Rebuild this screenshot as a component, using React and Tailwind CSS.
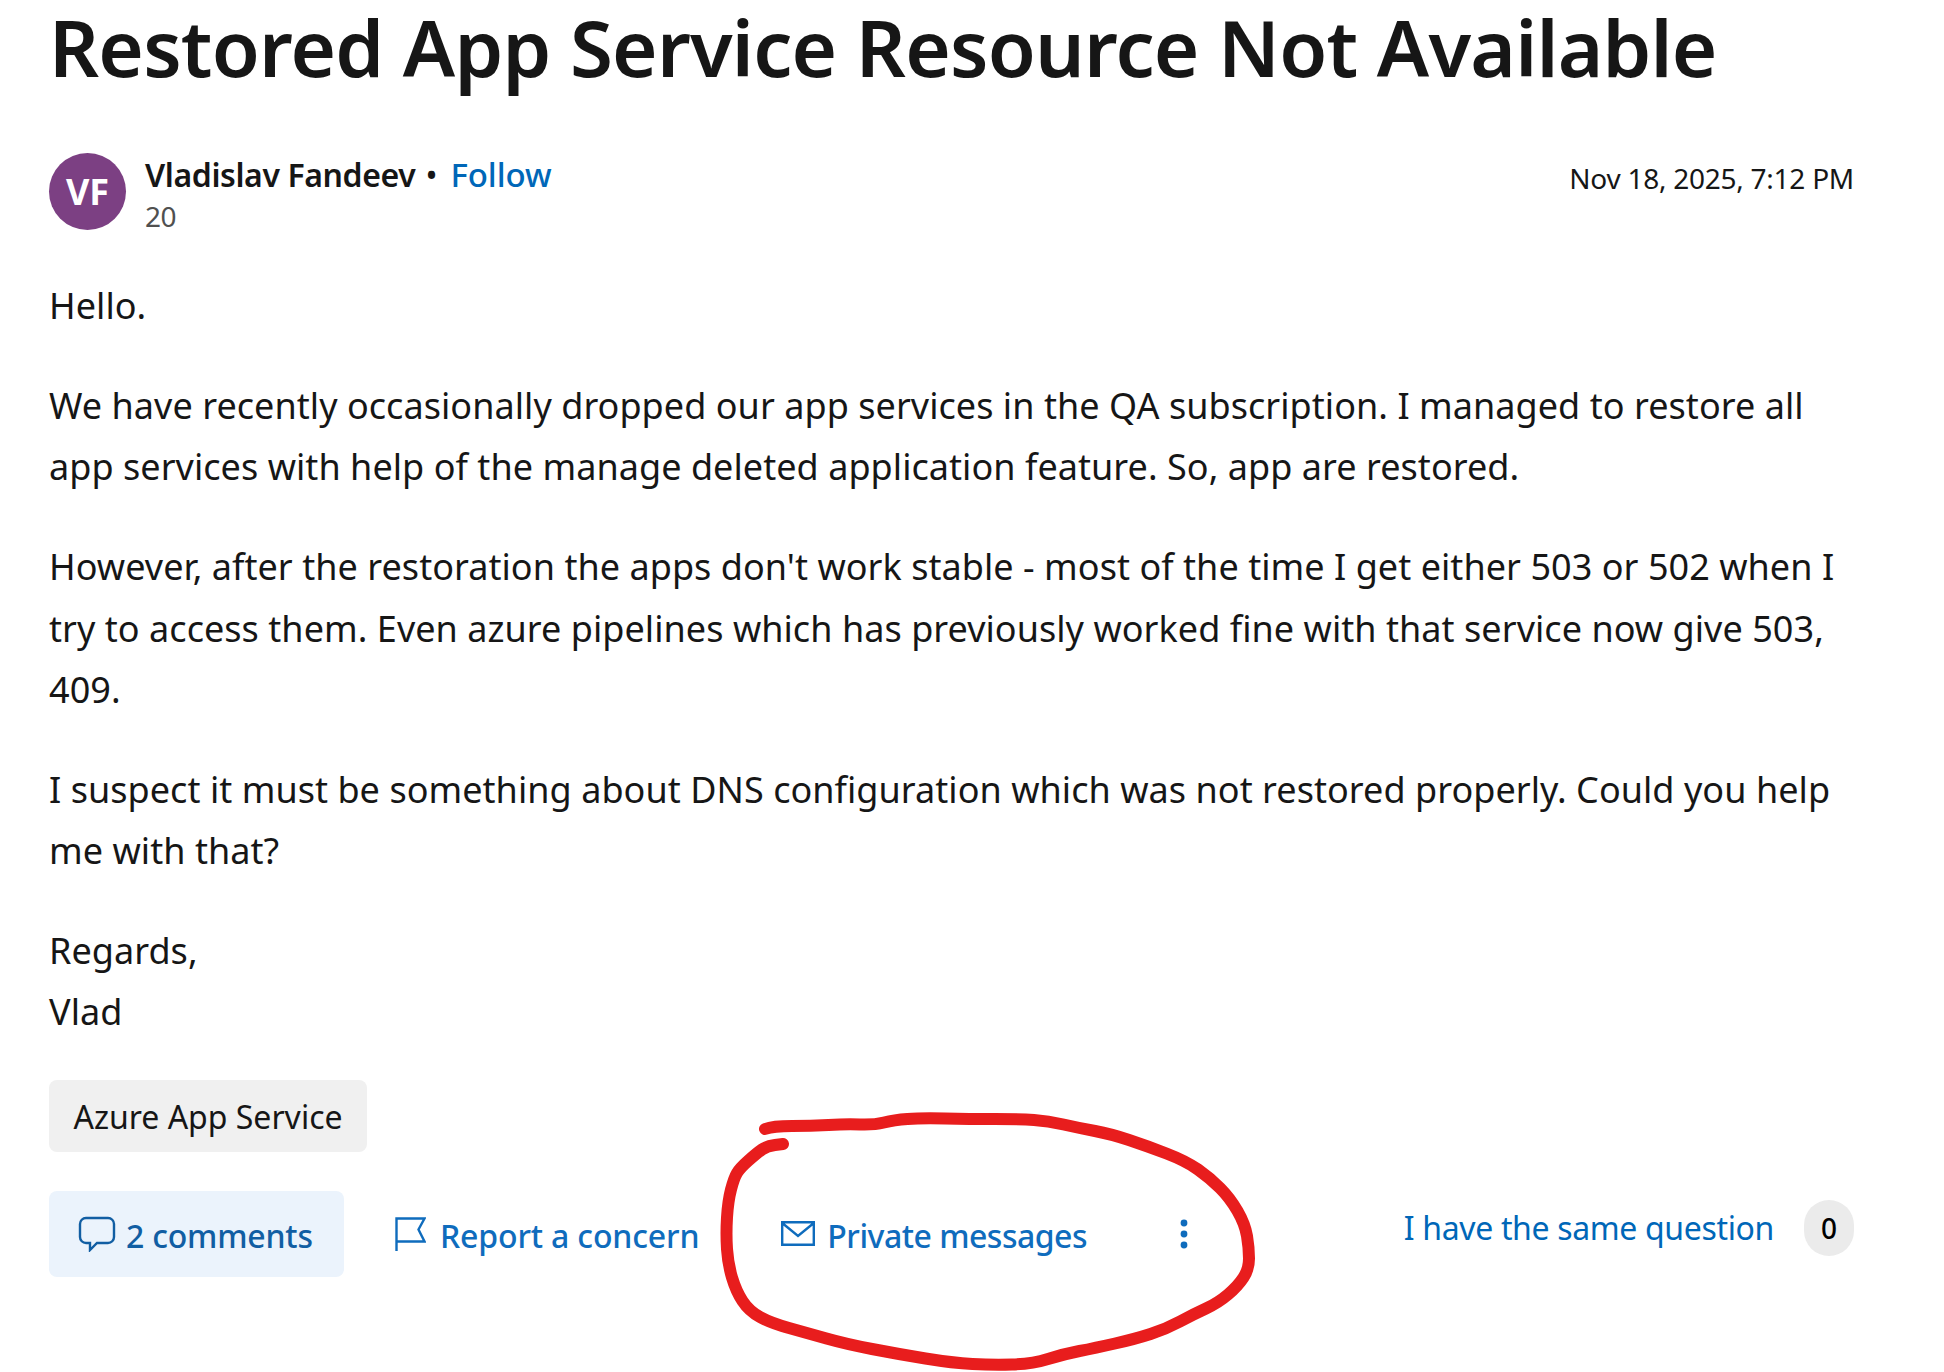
const blue = "#0f6cbd";
const pts = [[65,39],[73,36],[111,36],[146,34],[174,35],[194,30],[221,28],[269,29],[320,29],[348,31],[379,38],[411,44],[447,56],[486,71],[510,88],[530,108],[545,134],[549,158],[549,179],[538,196],[518,213],[494,224],[466,239],[435,249],[395,258],[364,264],[332,274],[292,275],[253,273],[198,264],[146,254],[107,243],[71,233],[49,221],[36,201],[28,174],[26,144],[28,111],[34,88],[40,78],[57,63],[67,56],[83,54]];
function smooth(p) {
  let d = `M${p[0][0]} ${p[0][1]}`;
  for (let i = 1; i < p.length - 1; i++) {
    const mx = (p[i][0] + p[i + 1][0]) / 2;
    const my = (p[i][1] + p[i + 1][1]) / 2;
    d += `Q${p[i][0]} ${p[i][1]} ${mx} ${my}`;
  }
  const l = p[p.length - 1];
  return d + `L${l[0]} ${l[1]}`;
}
function App() {
  return (
    <div className="relative w-[1944px] h-[1372px] overflow-hidden bg-white text-[#161616] font-['Noto_Sans','Open_Sans',sans-serif] pl-[49px] pr-[90px] pt-[2px]">
      <h1 className="text-[78px] leading-[90px] font-semibold tracking-[-0.8px] whitespace-nowrap">Restored App Service Resource Not Available</h1>
      <div className="mt-[61px] flex justify-between h-[78px]">
        <div className="flex gap-[19px]">
          <div className="w-[77px] h-[77px] rounded-full bg-[#7c4083] text-white flex items-center justify-center text-[36px] font-bold">VF</div>
          <div>
            <div className="flex items-center text-[32px] leading-[43px] font-semibold tracking-[-0.4px]">
              <span>Vladislav Fandeev</span>
              <span className="ml-[11px] mr-[14px] text-[28px]">•</span>
              <span className="text-[#0067b8] font-medium text-[33px] tracking-[-0.1px]">Follow</span>
            </div>
            <div className="text-[28px] leading-[38px] mt-[1px] text-[#505050] tracking-[-0.5px]">20</div>
          </div>
        </div>
        <div className="text-[28px] leading-[38px] mt-[6px] tracking-[-0.25px]">Nov 18, 2025, 7:12 PM</div>
      </div>
      <div className="mt-[44px] text-[36px] leading-[61.3px] tracking-[0.05px] whitespace-nowrap">
        <p>Hello.</p>
        <p className="mt-[38.7px]">We have recently occasionally dropped our app services in the QA subscription. I managed to restore all<br />app services with help of the manage deleted application feature. So, app are restored.</p>
        <p className="mt-[38.7px]">However, after the restoration the apps don't work stable - most of the time I get either 503 or 502 when I<br />try to access them. Even azure pipelines which has previously worked fine with that service now give 503,<br />409.</p>
        <p className="mt-[38.7px]">I suspect it must be something about DNS configuration which was not restored properly. Could you help<br />me with that?</p>
        <p className="mt-[38.7px]">Regards,<br />Vlad</p>
      </div>
      <div className="mt-[37px] w-[318px] h-[72px] rounded-[8px] bg-[#f0f0f0] flex items-center justify-center text-[32px] pt-[3px]">Azure App Service</div>
      <div className="mt-[39px] flex items-start text-[32px] font-medium">
        <div className="w-[295px] h-[86px] rounded-[8px] bg-[#ebf3fc] flex items-center text-[#115ea3] pl-[29px]">
          <svg width="38" height="36" viewBox="0 0 38 36" fill="none" stroke="currentColor" strokeWidth="2.4"><path d="M8 2h22a6 6 0 0 1 6 6v13a6 6 0 0 1-6 6H19l-7 7v-7H8a6 6 0 0 1-6-6V8a6 6 0 0 1 6-6z" /></svg>
          <span className="ml-[10px] pt-[5px] tracking-[-0.2px]">2 comments</span>
        </div>
        <div className="ml-[51px] h-[86px] flex items-center" style={{ color: blue }}>
          <svg width="31" height="34" viewBox="0 0 31 34" fill="none" stroke="currentColor" strokeWidth="2.4"><path d="M1.5 34V1.5h28l-6 11 6 12h-28" /></svg>
          <span className="ml-[14px] pt-[5px] tracking-[-0.15px]">Report a concern</span>
        </div>
        <div className="ml-[82px] h-[86px] flex items-center" style={{ color: blue }}>
          <svg width="34" height="25" viewBox="0 0 34 25" fill="none" stroke="currentColor" strokeWidth="2.4"><path d="M1.2 1.2h31.6v22.6H1.2zM1.2 2l15.8 13L32.8 2" /></svg>
          <span className="ml-[12px] pt-[5px] tracking-[-0.5px]">Private messages</span>
        </div>
        <div className="ml-[93px] h-[86px] flex items-center" style={{ color: blue }}>
          <svg width="8" height="30" viewBox="0 0 8 30" fill="currentColor"><circle cx="4" cy="4" r="3.4" /><circle cx="4" cy="15" r="3.4" /><circle cx="4" cy="26" r="3.4" /></svg>
        </div>
        <div className="ml-auto flex items-center h-[56px] mt-[9px] font-normal">
          <span className="text-[#0067b8] tracking-[-0.35px]">I have the same question</span>
          <div className="ml-[30px] w-[50px] h-[56px] rounded-full bg-[#ebebeb] text-black flex items-center justify-center text-[28px] font-medium tracking-normal">0</div>
        </div>
      </div>
      <svg className="absolute left-[700px] top-[1090px]" width="620" height="282" viewBox="0 0 620 282" fill="none" stroke="#e81d1d" strokeWidth="12" strokeLinecap="round" strokeLinejoin="round">
        <path d={smooth(pts)} />
      </svg>
    </div>
  );
}
export default App;
